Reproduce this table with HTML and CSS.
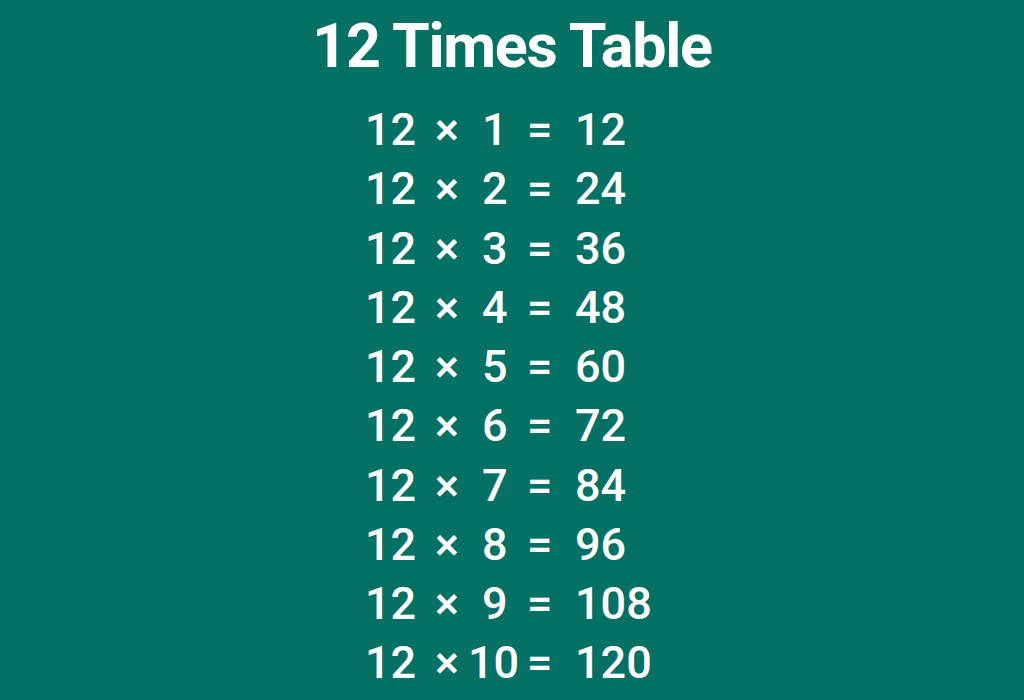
FILE: index.html
```html
<!DOCTYPE html>
<html>
<head>
<meta charset="utf-8">
<link rel="stylesheet" href="styles.css">
</head>
<body>
<main class="page">
  <h1 class="title">12 Times Table</h1>
  <div class="table">
    <div class="row"><span>12</span><span>×</span><span>1</span><span>=</span><span>12</span></div>
    <div class="row"><span>12</span><span>×</span><span>2</span><span>=</span><span>24</span></div>
    <div class="row"><span>12</span><span>×</span><span>3</span><span>=</span><span>36</span></div>
    <div class="row"><span>12</span><span>×</span><span>4</span><span>=</span><span>48</span></div>
    <div class="row"><span>12</span><span>×</span><span>5</span><span>=</span><span>60</span></div>
    <div class="row"><span>12</span><span>×</span><span>6</span><span>=</span><span>72</span></div>
    <div class="row"><span>12</span><span>×</span><span>7</span><span>=</span><span>84</span></div>
    <div class="row"><span>12</span><span>×</span><span>8</span><span>=</span><span>96</span></div>
    <div class="row"><span>12</span><span>×</span><span>9</span><span>=</span><span>108</span></div>
    <div class="row row-wide"><span>12</span><span>×</span><span>10</span><span>=</span><span>120</span></div>
  </div>
</main>
</body>
</html>
```
FILE: styles.css
```css
html, body {
  margin: 0;
  padding: 0;
}
body {
  background: #057165;
  color: #ffffff;
  font-family: Roboto, "Liberation Sans", sans-serif;
  width: 1024px;
  height: 700px;
  overflow: hidden;
}
.page {
  display: flex;
  flex-direction: column;
  align-items: center;
}
.title {
  margin: 15px 0 0 0;
  font-size: 61px;
  line-height: 62px;
  font-weight: 700;
  letter-spacing: -1.3px;
}
.table {
  margin-top: 23px;
  align-self: flex-start;
  margin-left: 365px;
}
.row {
  display: grid;
  grid-template-columns: 70px 47px 45px 48px auto;
  font-size: 45px;
  line-height: 59.25px;
  font-weight: 500;
}
.row-wide {
  grid-template-columns: 70px 33px 59px 48px auto;
}
```
